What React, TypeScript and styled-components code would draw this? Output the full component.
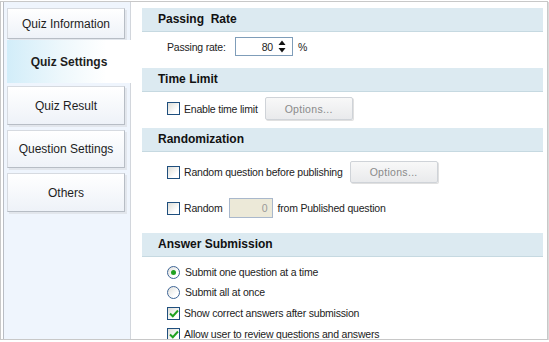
import styled, { createGlobalStyle } from 'styled-components';

const GlobalStyle = createGlobalStyle`
  body {
    margin: 0;
    background: #ffffff;
    font-family: "Liberation Sans", Arial, sans-serif;
  }
`;

const Frame = styled.div`
  display: flex;
  width: 546px;
  height: 337px;
  margin: 1px 0 0 0;
  border: 1px solid #c8c8c8;
  box-shadow: 1px 1px 0 #dadada, 2px 2px 0 #ececec;
  background: #ffffff;
  overflow: hidden;
`;

const Sidebar = styled.div`
  width: 128px;
  margin-left: 2px;
  padding: 6px 0 0 3px;
  box-sizing: border-box;
  background: #eff5fd;
  border-left: 1px solid #b9bdc4;
  border-right: 1px solid #d2d6dc;
  display: flex;
  flex-direction: column;
`;

const Tab = styled.div<{ active?: boolean; h: number; gap: number }>`
  box-sizing: border-box;
  height: ${({ h }) => h}px;
  margin-bottom: ${({ gap }) => gap}px;
  width: ${({ active }) => (active ? 124 : 118)}px;
  display: flex;
  align-items: center;
  justify-content: center;
  font-size: 12px;
  color: #1e1e1e;
  font-weight: ${({ active }) => (active ? 'bold' : 'normal')};
  background: ${({ active }) =>
    active
      ? 'linear-gradient(to right, #d2edf9 0%, #eef8fc 45%, #ffffff 80%)'
      : 'linear-gradient(to bottom, #ffffff, #eef2f8)'};
  border: ${({ active }) => (active ? 'none' : '1px solid #d6dae0')};
  border-right-color: #b7bdc5;
  border-bottom-color: #b7bdc5;
  box-shadow: ${({ active }) => (active ? 'none' : '2px 2px 0 #e2e6ec')};
`;

const Main = styled.div`
  flex: 1;
  padding: 6px 4px 0 11px;
  overflow: hidden;
`;

const Header = styled.div`
  height: 23px;
  line-height: 23px;
  padding-left: 16px;
  background: #dceaf1;
  border-bottom: 1px solid #c6d9e1;
  font-size: 12px;
  font-weight: bold;
  color: #111;
  white-space: pre;
`;

const Body = styled.div<{ top: number; bottom: number }>`
  padding: ${({ top }) => top}px 0 ${({ bottom }) => bottom}px 25px;
`;

const Row = styled.div<{ h: number; mt?: number }>`
  display: flex;
  align-items: center;
  height: ${({ h }) => h}px;
  margin-top: ${({ mt }) => mt ?? 0}px;
  font-size: 10.5px;
  letter-spacing: -0.2px;
  color: #222;
  white-space: nowrap;
`;

const Label = styled.span<{ w?: number }>`
  width: ${({ w }) => (w ? `${w}px` : 'auto')};
`;

const Box = styled.span<{ checked?: boolean }>`
  box-sizing: border-box;
  width: 13px;
  height: 13px;
  margin-right: 4px;
  border: 1px solid #1f4f7e;
  background: linear-gradient(135deg, #dcdcd6, #ffffff 70%);
  display: flex;
  align-items: center;
  justify-content: center;
`;

const Radio = styled.span`
  box-sizing: border-box;
  width: 13px;
  height: 13px;
  margin-right: 5px;
  border: 1px solid #3e6596;
  border-radius: 50%;
  background: linear-gradient(135deg, #e0e0dc, #ffffff 70%);
  display: flex;
  align-items: center;
  justify-content: center;
`;

const Dot = styled.span`
  width: 5px;
  height: 5px;
  border-radius: 50%;
  background: #21a121;
`;

const NumberField = styled.div<{ w: number; h: number; disabled?: boolean }>`
  box-sizing: border-box;
  width: ${({ w }) => w}px;
  height: ${({ h }) => h}px;
  border: 1px solid ${({ disabled }) => (disabled ? '#a9b8cc' : '#7f9db9')};
  background: ${({ disabled }) => (disabled ? '#ece9d8' : '#ffffff')};
  color: ${({ disabled }) => (disabled ? '#9a9a9a' : '#222')};
  display: flex;
  align-items: center;
  justify-content: flex-end;
  padding-right: ${({ disabled }) => (disabled ? 4 : 6)}px;
  margin: 0 5px 0 ${({ disabled }) => (disabled ? 6 : 0)}px;
  gap: 5px;
`;

const OptionsButton = styled.div<{ h: number }>`
  box-sizing: border-box;
  width: 88px;
  height: ${({ h }) => h}px;
  margin-left: 7px;
  border: 1px solid #cfd3d8;
  border-radius: 2px;
  background: linear-gradient(to bottom, #f8f8f8, #e9eaec);
  box-shadow: 1px 1px 0 #e0e0e0;
  color: #8a8a8a;
  display: flex;
  align-items: center;
  justify-content: center;
  letter-spacing: 0.3px;
`;

const Check = () => (
  <svg width="10" height="9" viewBox="0 0 10 9">
    <path d="M1 4.5 L3.8 7.2 L9 1.5" fill="none" stroke="#21a121" strokeWidth="2" />
  </svg>
);

const Spinner = () => (
  <svg width="8" height="13" viewBox="0 0 8 13">
    <path d="M4 0.5 L7.5 5 L0.5 5 Z" fill="#111" />
    <path d="M0.5 8 L7.5 8 L4 12.5 Z" fill="#111" />
  </svg>
);

const tabs = [
  { label: 'Quiz Information', h: 31, gap: 1 },
  { label: 'Quiz Settings', h: 43, gap: 3, active: true },
  { label: 'Quiz Result', h: 39, gap: 5 },
  { label: 'Question Settings', h: 38, gap: 5 },
  { label: 'Others', h: 39, gap: 0 },
];

export default function App() {
  return (
    <>
      <GlobalStyle />
      <Frame>
        <Sidebar>
          {tabs.map((t) => (
            <Tab key={t.label} active={t.active} h={t.h} gap={t.gap}>
              {t.label}
            </Tab>
          ))}
        </Sidebar>
        <Main>
          <Header>{'Passing  Rate'}</Header>
          <Body top={5} bottom={12}>
            <Row h={19}>
              <Label w={68}>Passing rate:</Label>
              <NumberField w={58} h={19}>
                80
                <Spinner />
              </NumberField>
              %
            </Row>
          </Body>

          <Header>Time Limit</Header>
          <Body top={5} bottom={8}>
            <Row h={23}>
              <Box />
              Enable time limit
              <OptionsButton h={23}>Options...</OptionsButton>
            </Row>
          </Body>

          <Header>Randomization</Header>
          <Body top={9} bottom={15}>
            <Row h={22}>
              <Box />
              Random question before publishing
              <OptionsButton h={22}>Options...</OptionsButton>
            </Row>
            <Row h={20} mt={15}>
              <Box />
              Random
              <NumberField w={44} h={20} disabled>
                0
              </NumberField>
              from Published question
            </Row>
          </Body>

          <Header>Answer Submission</Header>
          <Body top={6} bottom={0}>
            <Row h={18}>
              <Radio>
                <Dot />
              </Radio>
              Submit one question at a time
            </Row>
            <Row h={18} mt={2}>
              <Radio />
              Submit all at once
            </Row>
            <Row h={18} mt={3}>
              <Box checked>
                <Check />
              </Box>
              Show correct answers after submission
            </Row>
            <Row h={18} mt={3}>
              <Box checked>
                <Check />
              </Box>
              Allow user to review questions and answers
            </Row>
          </Body>
        </Main>
      </Frame>
    </>
  );
}
